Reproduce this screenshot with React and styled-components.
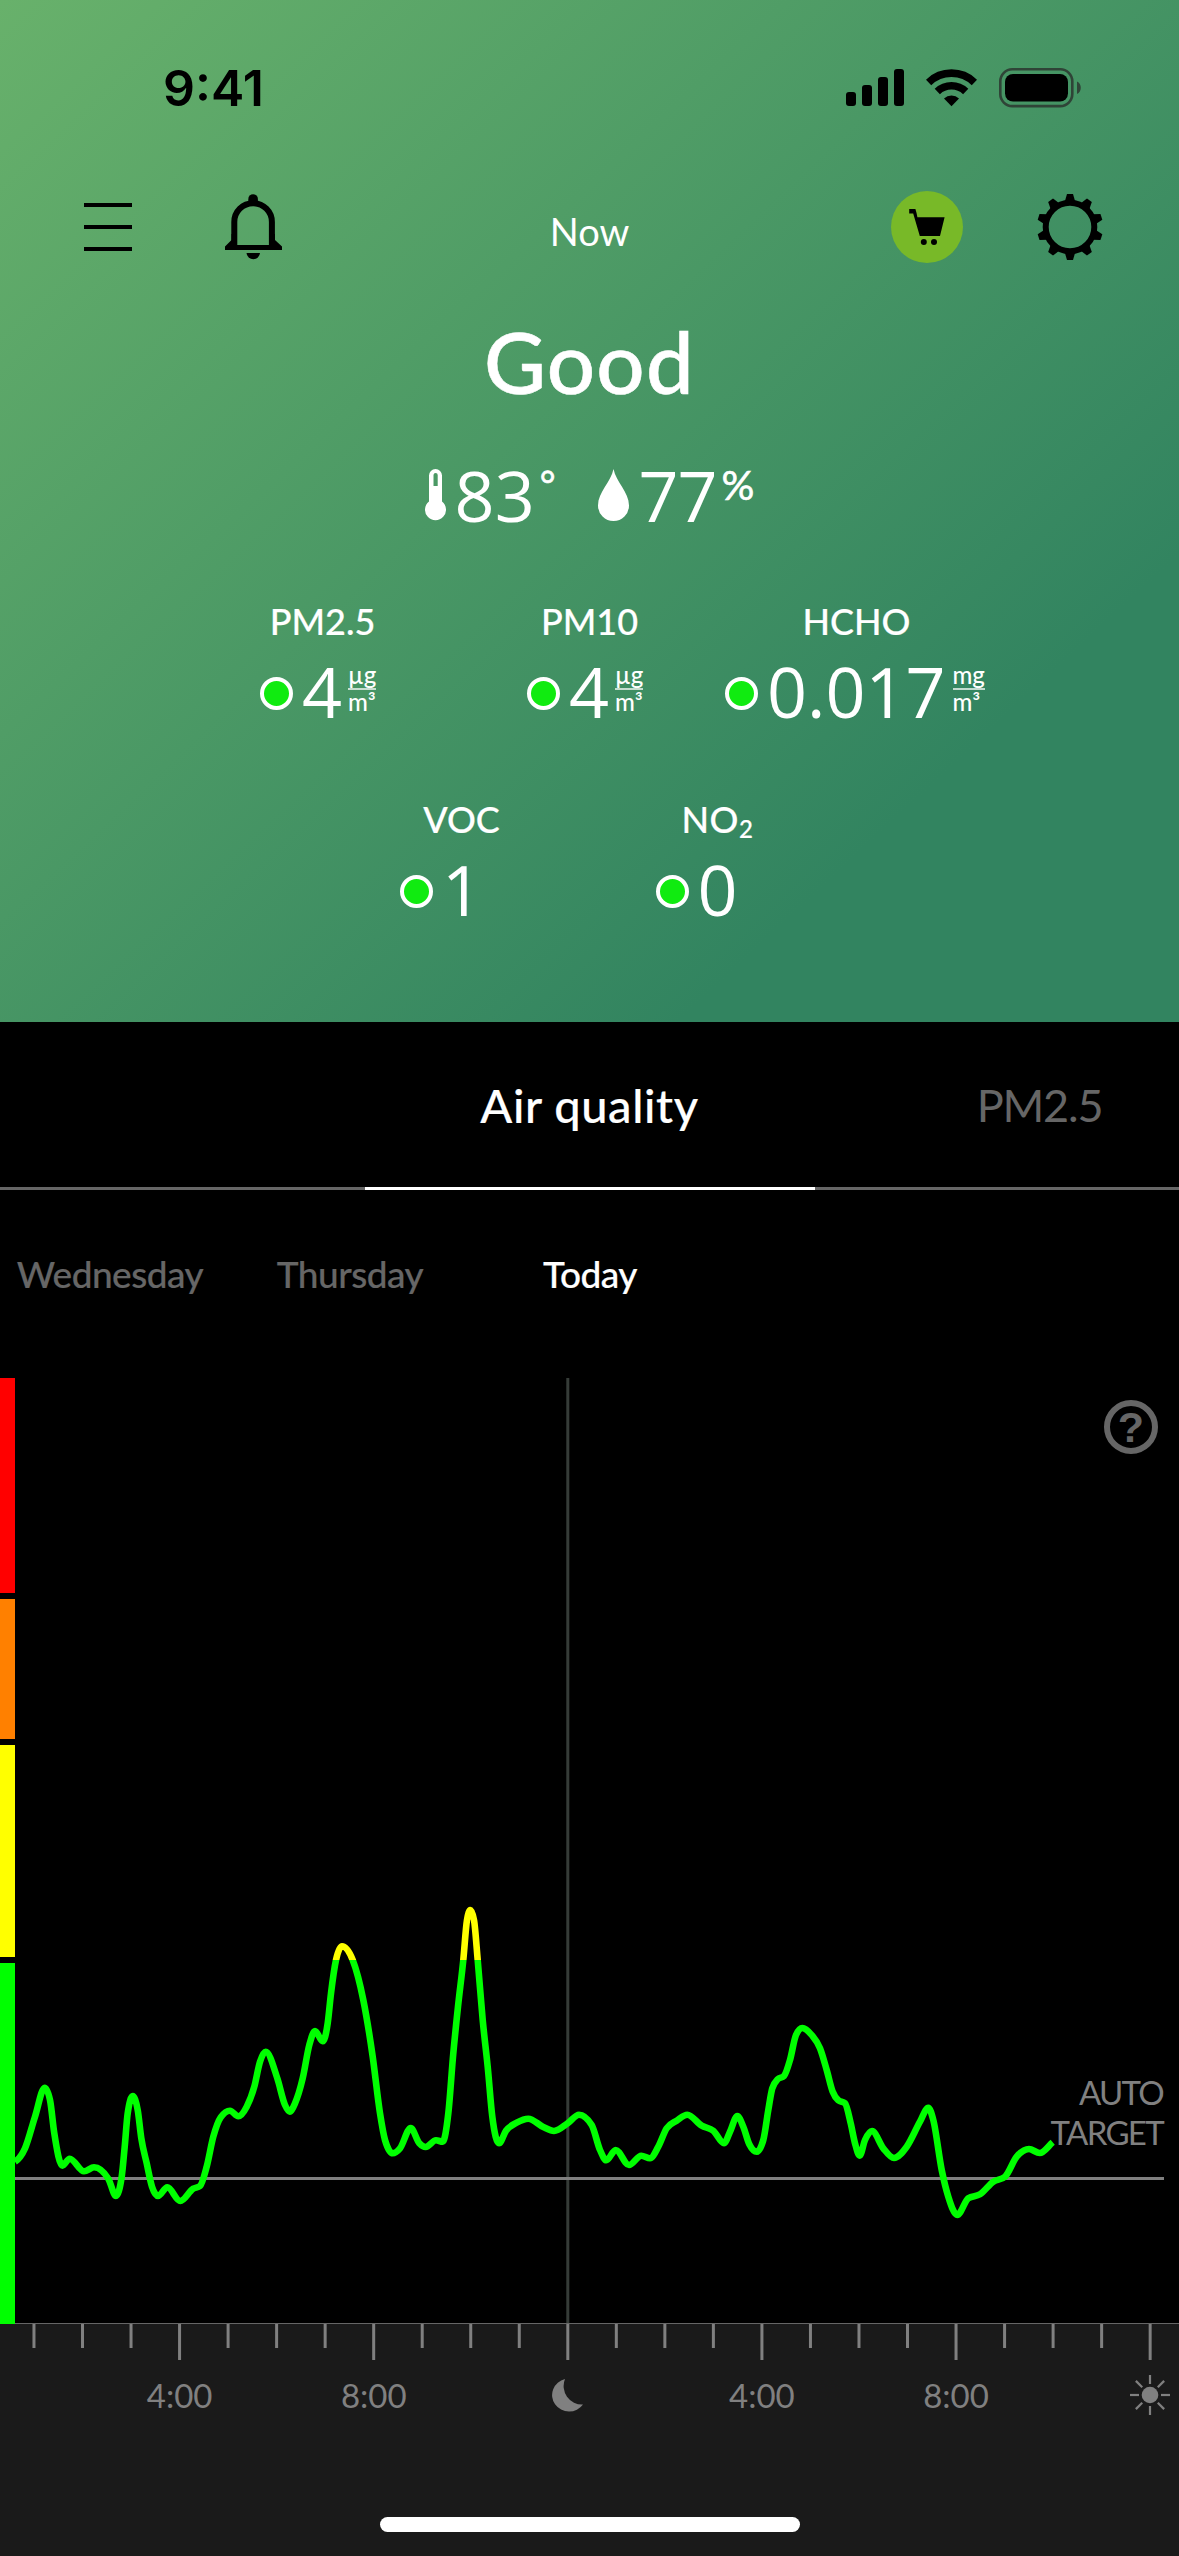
import React from 'react';
import styled, { createGlobalStyle } from 'styled-components';

const GlobalStyle = createGlobalStyle`
  *, *::before, *::after {
    box-sizing: border-box;
  }

  body {
    margin: 0;
    background: #000;
    font-family: Lato, 'Open Sans', sans-serif;
  }
`;

const Screen = styled.div`
  display: flex;
  flex-direction: column;
  width: 1179px;
  height: 2556px;
  overflow: hidden;
  background: #000;
`;

const Hero = styled.section`
  height: 1022px;
  color: #fff;
  background: linear-gradient(137deg, #68b16b 0%, #328460 78%);
`;

const StatusBar = styled.div`
  display: flex;
  align-items: center;
  justify-content: space-between;
  height: 176px;
  padding: 0 97px 0 163px;
  color: #000;
`;

const Clock = styled.span`
  font: 600 50px/60px Inter, sans-serif;
`;

const StatusIcons = styled.div`
  display: flex;
  align-items: center;
  gap: 22px;
`;

const NavBar = styled.nav`
  display: grid;
  grid-template-columns: 1fr auto 1fr;
  align-items: center;
  height: 102px;
  padding: 0 76px 0 84px;
`;

const NavGroup = styled.div`
  display: flex;
  align-items: center;
  justify-content: ${({ end }) => (end ? 'flex-end' : 'flex-start')};
  gap: ${({ end }) => (end ? '74px' : '93px')};
`;

const NavTitle = styled.span`
  padding: 8px 8px 0 0;
  font-size: 38px;
  line-height: 46px;
`;

const MenuIcon = styled.div`
  display: flex;
  flex-direction: column;
  justify-content: space-between;
  width: 48px;
  height: 48px;

  &::before,
  &::after,
  span {
    content: '';
    height: 4px;
    background: #000;
  }
`;

const CartButton = styled.div`
  display: flex;
  align-items: center;
  justify-content: center;
  width: 72px;
  height: 72px;
  border-radius: 50%;
  background: #78b928;
`;

const Verdict = styled.h1`
  margin: 0;
  font-size: 85px;
  font-weight: 500;
  line-height: 166px;
  letter-spacing: 1.2px;
  text-align: center;
  -webkit-text-stroke: 0.6px #fff;
`;

const Climate = styled.div`
  display: flex;
  justify-content: center;
  height: 101px;
  gap: 43px;
`;

const Reading = styled.div`
  display: flex;
  align-items: center;
`;

const Digits = styled.span`
  font-family: 'Open Sans', sans-serif;
  font-size: 70px;
  line-height: 90px;
  letter-spacing: ${({ spacing = 0 }) => spacing}px;
`;

const Suffix = styled.span`
  align-self: flex-start;
  margin-top: ${({ top }) => top}px;
  font-size: ${({ size }) => size}px;
  line-height: 50px;
  -webkit-text-stroke: 0.6px #fff;
`;

const Gap = styled.span`
  width: ${({ size }) => size}px;
`;

const Metrics = styled.div`
  display: flex;
  flex-direction: column;
  gap: 58px;
  padding-top: 51px;
`;

const MetricsRow = styled.div`
  display: flex;
  justify-content: center;
`;

const Metric = styled.div`
  display: flex;
  flex-direction: column;
  align-items: center;
  width: ${({ width }) => width}px;
`;

const MetricLabel = styled.span`
  font-size: 36px;
  font-weight: 500;
  line-height: 50px;
  letter-spacing: ${({ spacing = 0 }) => spacing}px;
  -webkit-text-stroke: 0.2px #fff;

  sub {
    font-size: 24px;
    line-height: 0;
    vertical-align: -5px;
  }
`;

const MetricValue = styled.div`
  display: flex;
  align-items: center;
  width: ${({ width }) => width}px;
  height: 90px;
`;

const Dot = styled.span`
  flex: none;
  width: 33px;
  height: 33px;
  margin: 5px 9px 0 0;
  border: 4.5px solid #fff;
  border-radius: 50%;
  background: #10eb10;
`;

const Unit = styled.span`
  display: flex;
  flex-direction: column;
  align-items: flex-start;
  margin: -5px 0 0 ${({ gap = 6 }) => gap}px;
  font-size: 24px;
  font-weight: 500;
  line-height: 24px;

  span:first-child {
    height: 27px;
    border-bottom: 2px solid rgba(255, 255, 255, 0.7);
  }
`;

const Tabs = styled.div`
  display: flex;
  flex: none;
  justify-content: center;
  height: 168px;
`;

const Tab = styled.div`
  display: flex;
  flex: none;
  align-items: center;
  justify-content: center;
  width: 450px;
  border-bottom: 3px solid ${({ active }) => (active ? '#fff' : '#666')};
  color: ${({ active }) => (active ? '#fff' : '#666')};
  font-size: ${({ active }) => (active ? 47 : 45)}px;
  font-weight: ${({ active }) => (active ? 500 : 400)};
  letter-spacing: ${({ active }) => (active ? 0.6 : -1.2)}px;
  -webkit-text-stroke: ${({ active }) => (active ? '0.2px' : '0')};
`;

const Days = styled.div`
  display: flex;
  flex: none;
  align-items: center;
  height: 188px;
  margin-left: -10px;
  padding-bottom: 22px;
`;

const Day = styled.span`
  width: 240px;
  color: ${({ active }) => (active ? '#fff' : '#666')};
  font-size: 37px;
  font-weight: 500;
  letter-spacing: -0.5px;
  text-align: center;
  -webkit-text-stroke: 0.2px;
`;

const Chart = styled.section`
  position: relative;
  display: flex;
  flex: none;
  height: 946px;
`;

const Scale = styled.div`
  display: flex;
  flex-direction: column;
  gap: 6px;
  width: 15px;
`;

const Band = styled.span`
  height: ${({ size }) => size}px;
  background: ${({ color }) => color};
`;

const HelpBadge = styled.div`
  position: absolute;
  top: 22px;
  right: 21px;
  display: flex;
  align-items: center;
  justify-content: center;
  width: 54px;
  height: 54px;
  border: 6px solid #666;
  border-radius: 50%;
  color: #666;
  font: 700 43px/42px 'Liberation Sans', sans-serif;
`;

const TargetLabel = styled.div`
  position: absolute;
  top: 694px;
  right: 16px;
  color: #808080;
  font-size: 33px;
  line-height: 40px;
  letter-spacing: -1.7px;
  text-align: right;
`;

const Footer = styled.footer`
  display: flex;
  flex: 1;
  flex-direction: column;
  align-items: center;
  background: #1a1a1a;
`;

const AxisLabels = styled.div`
  display: flex;
  flex: none;
  align-self: flex-start;
  height: 157px;
  margin-left: 82.6px;
  padding-top: 11px;
`;

const AxisLabel = styled.span`
  display: flex;
  flex: none;
  align-items: center;
  justify-content: center;
  width: 194.1px;
  height: 48px;
  color: #808080;
  font-size: 33px;
`;

const HomeIndicator = styled.div`
  width: 420px;
  height: 15px;
  margin-left: 1px;
  border-radius: 8px;
  background: #fff;
`;

const HOUR = 48.53;
const MIDNIGHT = 567.8;
const YELLOW_FROM = 582;

// [x, y] inside the 1179 x 946 plot
const airQuality = [
  [15, 783.7], [25, 770.3], [35, 738.7], [44.7, 709.7], [50, 722], [54.3, 755.3],
  [62.3, 787.7], [69.7, 780.7], [84, 793.3], [94, 789.3], [108.3, 800.7], [116, 818],
  [121.7, 798.7], [124.7, 768.7], [127.7, 735.3], [132.7, 718], [137.7, 732],
  [141.3, 760.3], [146.7, 785.3], [152, 808.7], [158, 818], [167.3, 809.3],
  [180.3, 823], [193.3, 810.7], [200, 808], [206.7, 788.7], [213.3, 758.7],
  [220.7, 739.3], [230, 732.7], [238.3, 738.3], [246.7, 728.7], [254.3, 708.7],
  [260, 683.7], [265.7, 673.7], [277.3, 700.3], [285, 727], [289.7, 733.7],
  [295, 725.3], [302.7, 700.3], [309.3, 667], [315, 653], [322.7, 663.3],
  [327.7, 645.3], [331, 615.3], [336, 582], [342, 568.3], [352.7, 582],
  [363.3, 622], [372.7, 678.7], [380, 735.3], [385, 762], [392.7, 775.3],
  [400, 770.3], [410.7, 750], [419.3, 765.3], [425.7, 769], [436, 762.3],
  [442.7, 763.7], [448.3, 735.3], [453.3, 675.3], [458, 628.7], [463.3, 582],
  [467, 542], [470.3, 532], [474, 542], [477.7, 582], [482.7, 642], [487.7, 688.7],
  [492.3, 738.7], [499, 765.3], [506, 752.7], [516.7, 744.7], [528.3, 740.7],
  [543.3, 749], [554, 753], [568, 745], [579, 736.7], [591.7, 747], [600, 772],
  [606.3, 782.3], [615.7, 772], [629, 787], [641.3, 777.7], [650, 780.3],
  [658.3, 768.7], [666.7, 750.3], [676.7, 742.7], [687.3, 736.7], [701.7, 747.7],
  [713.3, 752.7], [724, 765.3], [730, 753.7], [737.3, 738], [743.3, 748.7],
  [749.3, 766.3], [756.7, 773.7], [763.3, 762], [768.3, 732], [772.3, 710.3],
  [777.7, 701.3], [784, 698], [790, 682], [796, 657], [802.3, 650], [811.7, 657],
  [820, 670.3], [826.7, 692], [832.7, 713.7], [838.3, 722.3], [845, 725.3],
  [850.7, 745.3], [855, 765.3], [859.7, 777.7], [865, 762], [872, 753],
  [883.3, 770.3], [894, 780], [906.7, 768.7], [920, 743.7], [928.3, 729.7],
  [933.3, 742], [941.7, 792], [948.3, 818.7], [957.3, 837], [968.3, 820.3],
  [980, 816.3], [993.3, 803.7], [1005, 798.7], [1016.7, 778.7], [1029, 771],
  [1039.7, 775], [1052.7, 764.3],
];

// monotone cubic interpolation, so peaks never overshoot their samples
const smoothPath = points => {
  const slope = i =>
    (points[i + 1][1] - points[i][1]) / (points[i + 1][0] - points[i][0]);
  const last = points.length - 1;
  const tangents = points.map((_, i) => {
    if (i === 0) return slope(0) / 2;
    if (i === last) return slope(last - 1);
    const a = slope(i - 1);
    const b = slope(i);
    const h0 = points[i][0] - points[i - 1][0];
    const h1 = points[i + 1][0] - points[i][0];
    const p = (a * h1 + b * h0) / (h0 + h1);
    return (
      (Math.sign(a) + Math.sign(b)) *
      Math.min(Math.abs(a), Math.abs(b), Math.abs(p) / 2)
    );
  });
  return points.reduce((path, [x, y], i) => {
    if (i === 0) return `M${x} ${y}`;
    const [px, py] = points[i - 1];
    const d = (x - px) / 3;
    return `${path}C${px + d} ${py + d * tangents[i - 1]} ${x - d} ${y -
      d * tangents[i]} ${x} ${y}`;
  }, '');
};

const SignalIcon = () => (
  <svg width="58" height="38" viewBox="0 0 58 38">
    <rect x="0" y="23" width="10" height="14" rx="3" />
    <rect x="16" y="16" width="10" height="21" rx="3" />
    <rect x="32" y="8" width="10" height="29" rx="3" />
    <rect x="48" y="0" width="10" height="37" rx="3" />
  </svg>
);

const WifiIcon = () => (
  <svg width="51" height="38" viewBox="0 0 51 38">
    <g fill="none" stroke="#000" strokeWidth="7.6">
      <path d="M2.6 13.4A33 33 0 0 1 48.4 13.4" />
      <path d="M11.3 22.4A20.6 20.6 0 0 1 39.7 22.4" />
    </g>
    <path d="M25.5 37.3L18 29.6A10.8 10.8 0 0 1 33 29.6Z" />
  </svg>
);

const BatteryIcon = () => (
  <svg width="83" height="40" viewBox="0 0 83 40">
    <rect x="1.3" y="1.3" width="72" height="36.8" rx="12" fill="none" stroke="#2f4437" strokeWidth="2.6" />
    <rect x="6" y="6" width="63" height="27.5" rx="8" />
    <path d="M78 13.5C83 15.5 83 24 78 26Z" fill="#2f4437" />
  </svg>
);

const BellIcon = () => (
  <svg width="58" height="66" viewBox="0 0 58 66">
    <path d="M23.3 5A4.8 4.8 0 0 1 32.9 5V10H23.3Z" />
    <path d="M9.3 54V28A18.8 18.8 0 0 1 46.9 28V54" fill="none" stroke="#000" strokeWidth="6" />
    <path d="M0 56V52.5L6.5 46V40H12V51H44V40H50V46L57 52.5V56Z" />
    <path d="M21.5 59H35A6.8 7 0 0 1 21.5 59Z" />
  </svg>
);

const CartIcon = () => (
  <svg width="38" height="36" viewBox="0 0 38 36">
    <path d="M1.2 0H7.4Q8.6 3.6 9.4 8.2H36.6L32 27H11.8L5.2 4.4H1.2Z" />
    <circle cx="15.8" cy="33" r="3" />
    <circle cx="26" cy="33" r="3" />
  </svg>
);

const GearIcon = () => (
  <svg width="66" height="66" viewBox="-33 -33 66 66">
    <circle r="24.3" fill="none" stroke="#000" strokeWidth="6" />
    {Array.from({ length: 10 }, (_, i) => (
      <path
        key={i}
        d="M-5.2 -25.5L-3 -33H3L5.2 -25.5Z"
        transform={`rotate(${i * 36})`}
      />
    ))}
  </svg>
);

const ThermometerIcon = () => (
  <svg width="21" height="52" viewBox="0 0 21 52">
    <path
      fill="#fff"
      fillRule="evenodd"
      d="M4 6.5A6.5 6.5 0 0 1 17 6.5V32.5A10.5 10.5 0 1 1 4 32.5ZM8.5 6V17H12.7V6A2.1 2.1 0 0 0 8.5 6Z"
    />
  </svg>
);

const DropIcon = () => (
  <svg width="31" height="52" viewBox="0 0 31 52">
    <path fill="#fff" d="M15.5 0C18 13 31 23 31 36.5A15.5 15.5 0 0 1 0 36.5C0 23 13 13 15.5 0Z" />
  </svg>
);

const MoonIcon = () => (
  <svg width="32" height="34" viewBox="0 0 32 34">
    <path fill="#808080" d="M13 1A17 16.5 0 1 0 31 26.5A18.5 18.5 0 0 1 13 1Z" />
  </svg>
);

const SunIcon = () => (
  <svg width="40" height="40" viewBox="-20 -20 40 40">
    <circle r="8.3" fill="#808080" />
    {Array.from({ length: 8 }, (_, i) => (
      <path
        key={i}
        d="M0 -20V-11"
        stroke="#808080"
        strokeWidth="2.2"
        transform={`rotate(${i * 45})`}
      />
    ))}
  </svg>
);

const UnitOf = ({ mass, gap }) => (
  <Unit gap={gap}>
    <span>{mass}</span>
    <span>m³</span>
  </Unit>
);

const Plot = () => (
  <svg width="1164" height="946" viewBox="15 0 1164 946">
    <defs>
      <linearGradient id="level" gradientUnits="userSpaceOnUse" x1="0" y1="0" x2="0" y2="946">
        <stop offset={YELLOW_FROM / 946} stopColor="#ff0" />
        <stop offset={YELLOW_FROM / 946} stopColor="#0f0" />
      </linearGradient>
    </defs>
    <path d={`M${MIDNIGHT} 0V946`} stroke="#363c38" strokeWidth="3" />
    <path d="M15 800.5H1164" stroke="#808080" strokeWidth="3" />
    <path d="M15 945.5H1179" stroke="#666" />
    <path
      d={smoothPath(airQuality)}
      fill="none"
      stroke="url(#level)"
      strokeWidth="6.6"
      strokeLinejoin="round"
    />
  </svg>
);

const Ticks = () => (
  <svg width="1179" height="36">
    {Array.from({ length: 24 }, (_, i) => i - 11).map(hour => (
      <path
        key={hour}
        d={`M${MIDNIGHT + hour * HOUR} 0V${hour % 4 ? 24 : 36}`}
        stroke="#808080"
        strokeWidth="3"
      />
    ))}
  </svg>
);

const App = () => (
  <>
    <GlobalStyle />
    <Screen>
      <Hero>
        <StatusBar>
          <Clock>9:41</Clock>
          <StatusIcons>
            <SignalIcon />
            <WifiIcon />
            <BatteryIcon />
          </StatusIcons>
        </StatusBar>
        <NavBar>
          <NavGroup>
            <MenuIcon>
              <span />
            </MenuIcon>
            <BellIcon />
          </NavGroup>
          <NavTitle>Now</NavTitle>
          <NavGroup end="true">
            <CartButton>
              <CartIcon />
            </CartButton>
            <GearIcon />
          </NavGroup>
        </NavBar>
        <Verdict>Good</Verdict>
        <Climate>
          <Reading>
            <ThermometerIcon />
            <Gap size={9} />
            <Digits>83</Digits>
            <Gap size={5} />
            <Suffix top={15} size={38}>°</Suffix>
          </Reading>
          <Reading>
            <DropIcon />
            <Gap size={9} />
            <Digits spacing={-1}>77</Digits>
            <Gap size={5} />
            <Suffix top={16} size={41}>%</Suffix>
          </Reading>
        </Climate>
        <Metrics>
          <MetricsRow>
            <Metric width={267}>
              <MetricLabel>PM2.5</MetricLabel>
              <MetricValue width={125}>
                <Dot />
                <Digits>4</Digits>
                <UnitOf mass="µg" />
              </MetricValue>
            </Metric>
            <Metric width={267}>
              <MetricLabel>PM10</MetricLabel>
              <MetricValue width={125}>
                <Dot />
                <Digits>4</Digits>
                <UnitOf mass="µg" />
              </MetricValue>
            </Metric>
            <Metric width={267}>
              <MetricLabel>HCHO</MetricLabel>
              <MetricValue width={263}>
                <Dot />
                <Digits>0.017</Digits>
                <UnitOf mass="mg" gap={7} />
              </MetricValue>
            </Metric>
          </MetricsRow>
          <MetricsRow>
            <Metric width={256}>
              <MetricLabel>VOC</MetricLabel>
              <MetricValue width={123}>
                <Dot />
                <Digits>1</Digits>
              </MetricValue>
            </Metric>
            <Metric width={256}>
              <MetricLabel spacing={0.6}>
                NO<sub>2</sub>
              </MetricLabel>
              <MetricValue width={124}>
                <Dot />
                <Digits>0</Digits>
              </MetricValue>
            </Metric>
          </MetricsRow>
        </Metrics>
      </Hero>
      <Tabs>
        <Tab />
        <Tab active="true">Air quality</Tab>
        <Tab>PM2.5</Tab>
      </Tabs>
      <Days>
        <Day>Wednesday</Day>
        <Day>Thursday</Day>
        <Day active="true">Today</Day>
      </Days>
      <Chart>
        <Scale>
          <Band size={215} color="#f00" />
          <Band size={140} color="#ff8000" />
          <Band size={212} color="#ff0" />
          <Band size={361} color="#0f0" />
        </Scale>
        <Plot />
        <HelpBadge>?</HelpBadge>
        <TargetLabel>
          AUTO
          <br />
          TARGET
        </TargetLabel>
      </Chart>
      <Footer>
        <Ticks />
        <AxisLabels>
          <AxisLabel>4:00</AxisLabel>
          <AxisLabel>8:00</AxisLabel>
          <AxisLabel>
            <MoonIcon />
          </AxisLabel>
          <AxisLabel>4:00</AxisLabel>
          <AxisLabel>8:00</AxisLabel>
          <AxisLabel>
            <SunIcon />
          </AxisLabel>
        </AxisLabels>
        <HomeIndicator />
      </Footer>
    </Screen>
  </>
);

export default App;
